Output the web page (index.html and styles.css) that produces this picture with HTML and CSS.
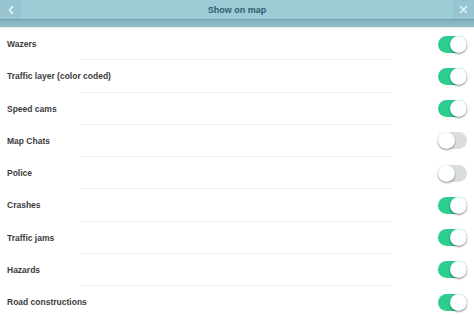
FILE: index.html
```html
<!DOCTYPE html>
<html>
<head>
<meta charset="utf-8">
<link rel="stylesheet" href="styles.css">
</head>
<body>
<div class="header">
  <div class="bar">
    <div class="hbtn">
      <svg width="8" height="10" viewBox="0 0 8 10"><path d="M5.5 1.5 L2.5 5 L5.5 8.5" fill="none" stroke="#e9f5f8" stroke-width="1.6" stroke-linecap="round" stroke-linejoin="round"/></svg>
    </div>
    <div class="title">Show on map</div>
    <div class="hbtn">
      <svg width="9" height="9" viewBox="0 0 9 9"><path d="M1.5 1.5 L7.5 7.5 M7.5 1.5 L1.5 7.5" fill="none" stroke="#e9f5f8" stroke-width="1.4" stroke-linecap="round"/></svg>
    </div>
  </div>
  <div class="band"></div>
</div>
<div class="list">
  <div class="row"><span class="label">Wazers</span><span class="toggle on"></span></div>
  <div class="row"><span class="label">Traffic layer (color coded)</span><span class="toggle on"></span></div>
  <div class="row"><span class="label">Speed cams</span><span class="toggle on"></span></div>
  <div class="row"><span class="label">Map Chats</span><span class="toggle"></span></div>
  <div class="row"><span class="label">Police</span><span class="toggle"></span></div>
  <div class="row"><span class="label">Crashes</span><span class="toggle on"></span></div>
  <div class="row"><span class="label">Traffic jams</span><span class="toggle on"></span></div>
  <div class="row"><span class="label">Hazards</span><span class="toggle on"></span></div>
  <div class="row"><span class="label">Road constructions</span><span class="toggle on"></span></div>
</div>
</body>
</html>
```
FILE: styles.css
```css
html, body {
  margin: 0;
  padding: 0;
  background: #ffffff;
  width: 474px;
  height: 315px;
  overflow: hidden;
  font-family: "Liberation Sans", Arial, sans-serif;
}
.header {
  display: flex;
  flex-direction: column;
}
.bar {
  height: 19px;
  background: #9dcbd6;
  display: flex;
  align-items: center;
  justify-content: space-between;
}
.hbtn {
  width: 21px;
  height: 19px;
  background: #97c6d2;
  display: flex;
  align-items: center;
  justify-content: center;
}
.title {
  font-size: 9px;
  font-weight: bold;
  color: #2e5f6d;
}
.band {
  height: 8px;
  background: linear-gradient(#6f9eac, #86b6c3 30%, #8cbcc8);
  border-bottom: 1px solid #e6f2f5;
}
.list {
  display: flex;
  flex-direction: column;
}
.row {
  height: 32.25px;
  box-sizing: border-box;
  display: flex;
  align-items: center;
  justify-content: space-between;
  padding: 0 7px 0 7px;
  position: relative;
}
.row::after {
  content: "";
  position: absolute;
  left: 80px;
  width: 312px;
  bottom: 0;
  height: 1px;
  background: #eeeeee;
}
.row:last-child::after { display: none; }
.label {
  font-size: 8.5px;
  font-weight: bold;
  color: #3c3c3c;
}
.toggle {
  width: 29px;
  height: 17px;
  border-radius: 9px;
  background: #d9dddd;
  position: relative;
  box-sizing: border-box;
}
.toggle::after {
  content: "";
  position: absolute;
  top: 0;
  left: 0;
  width: 17px;
  height: 17px;
  border-radius: 50%;
  background: #ffffff;
  box-shadow: 0 1px 2px rgba(0,0,0,0.45);
}
.toggle.on {
  background: #2dce8d;
}
.toggle.on::after {
  left: 12px;
}
```
